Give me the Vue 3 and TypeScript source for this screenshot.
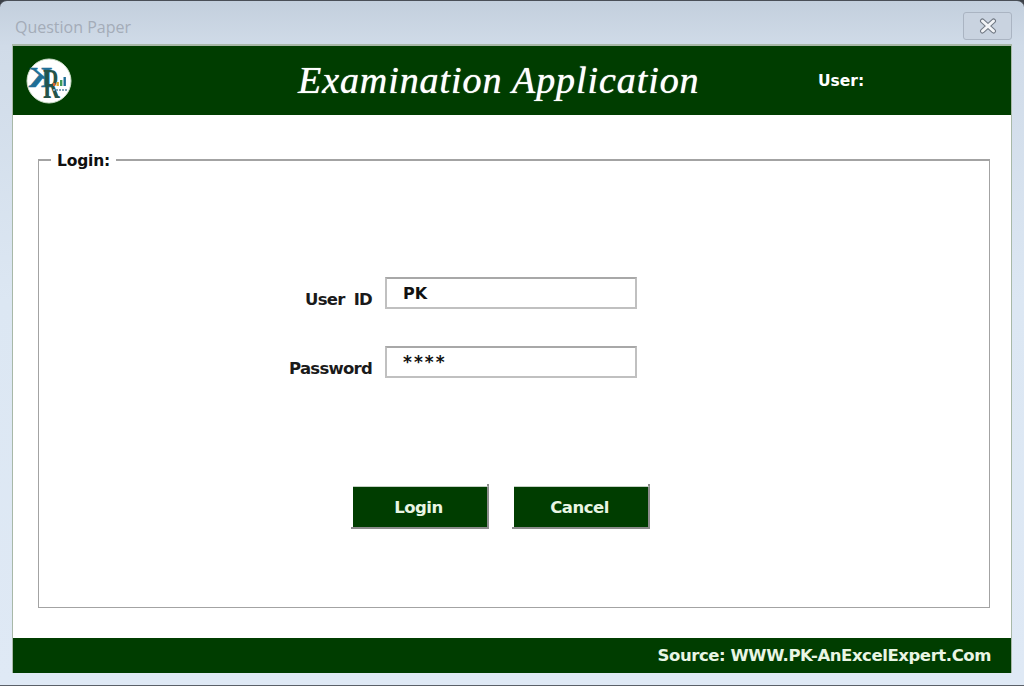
<script setup lang="ts">
import { ref } from "vue"

const userId = ref("PK")
const password = ref("****")
const logoBars = [
  { x: 27, y: 25, h: 3, fill: "#d9622b" },
  { x: 30.5, y: 24, h: 4, fill: "#e0a92e" },
  { x: 34, y: 22, h: 6, fill: "#3f9a55" },
  { x: 37.5, y: 19, h: 9, fill: "#1f6f96" }
]
</script>

<template>
  <div class="window">
    <div class="titlebar">
      <span class="caption">Question Paper</span>
      <button class="close" type="button" aria-label="Close">
        <svg width="18" height="16" viewBox="0 0 18 16">
          <path
            d="M3.5 3 L14.5 13 M14.5 3 L3.5 13"
            stroke="#6f7782"
            stroke-width="5"
            stroke-linecap="round"
          />
          <path
            d="M3.5 3 L14.5 13 M14.5 3 L3.5 13"
            stroke="#f2f4f7"
            stroke-width="3"
            stroke-linecap="round"
          />
        </svg>
      </button>
    </div>

    <main class="client">
      <header class="banner">
        <svg class="logo" width="46" height="46" viewBox="0 0 46 46">
          <circle cx="23" cy="23" r="22" fill="#ffffff" stroke="#cfe0cc" stroke-width="1" />
          <text transform="translate(26 29) scale(-1 1)" class="logo-k">K</text>
          <text transform="translate(17 40) scale(0.55 1)" class="logo-r">R</text>
          <rect
            v-for="bar in logoBars"
            :key="bar.x"
            :x="bar.x"
            :y="bar.y"
            width="2.4"
            :height="bar.h"
            :fill="bar.fill"
          />
          <path d="M27 32 H41" stroke="#7fa3b5" stroke-width="2" stroke-dasharray="2 1" />
        </svg>
        <h1>Examination Application</h1>
        <span class="user">User:</span>
      </header>

      <section class="body">
        <fieldset class="login">
          <legend>Login:</legend>
          <div class="fields">
            <label for="user-id">User ID</label>
            <input id="user-id" v-model="userId" type="text" />
            <label for="password">Password</label>
            <input id="password" v-model="password" class="secret" type="text" />
          </div>
          <div class="actions">
            <button type="button">Login</button>
            <button type="button">Cancel</button>
          </div>
        </fieldset>
      </section>

      <footer class="source">Source: WWW.PK-AnExcelExpert.Com</footer>
    </main>
  </div>
</template>

<style>
html,
body {
  margin: 0;
  background: #3c4148;
}
</style>

<style scoped>
.window {
  box-sizing: border-box;
  width: 1024px;
  height: 686px;
  padding: 1px 13px 12px 13px;
  border-top: 1px solid #4a4f57;
  border-bottom: 1px solid #5a6068;
  border-radius: 7px 7px 0 0;
  background: linear-gradient(180deg, #c3cfdd 0, #d0dbe8 45px, #dce7f3 300px, #dfe9f5 100%);
  display: flex;
  flex-direction: column;
  font-family: "DejaVu Sans", "Liberation Sans", sans-serif;
}

.titlebar {
  height: 44px;
  flex: none;
  display: flex;
  align-items: center;
  justify-content: space-between;
  padding: 0 0 0 2px;
}

.caption {
  font-family: "Open Sans", "Liberation Sans", sans-serif;
  font-size: 16px;
  color: #a4acb8;
  margin-top: 6px;
}

.close {
  width: 49px;
  height: 28px;
  margin: 4px -1px 0 0;
  padding: 0;
  border: 1px solid #aab4c2;
  border-radius: 3px;
  background: #c9d3e0;
  display: flex;
  align-items: center;
  justify-content: center;
}

.client {
  flex: 1;
  display: flex;
  flex-direction: column;
  background: #ffffff;
  box-shadow: 0 -1px 0 1px #a8b8a8;
}

.banner {
  height: 69px;
  flex: none;
  display: flex;
  align-items: center;
  background: #003d00;
  color: #ffffff;
  padding-left: 13px;
}

.logo {
  flex: none;
}

.logo-k,
.logo-r {
  font-family: "Liberation Serif", serif;
  font-weight: 700;
}

.logo-k {
  font-size: 30px;
  fill: #1f6f96;
  stroke: #1f6f96;
  stroke-width: 0.7px;
}

.logo-r {
  font-size: 42px;
  fill: #24544a;
}

.banner h1 {
  margin: -2px 0 0 226px;
  width: 402px;
  flex: none;
  font-family: "Liberation Serif", serif;
  font-style: italic;
  font-weight: 400;
  font-size: 38px;
  letter-spacing: 0.92px;
  white-space: nowrap;
  text-shadow: 0 0 1px #ffffff;
}

.user {
  margin-left: 118px;
  font-size: 15.5px;
  font-weight: 700;
}

.body {
  flex: 1;
  padding: 34px 21px 30px 25px;
  display: flex;
}

.login {
  flex: 1;
  margin: 0;
  min-width: 0;
  padding: 0;
  border: 1px solid #a3a3a3;
  border-top-width: 2px;
  display: flex;
  flex-direction: column;
}

.login legend {
  margin-left: 12px;
  padding: 3px 6px 0;
  font-size: 15.5px;
  font-weight: 700;
  letter-spacing: -0.2px;
  color: #111111;
}

.fields {
  margin: 107px 0 0 235px;
  display: grid;
  grid-template-columns: 98px 252px;
  grid-auto-rows: 32px;
  row-gap: 37px;
  column-gap: 13px;
  align-items: center;
}

.fields label {
  text-align: right;
  font-size: 16.5px;
  font-weight: 700;
  letter-spacing: -0.75px;
  word-spacing: 4px;
  color: #1a1a1a;
  margin-top: 12px;
  white-space: nowrap;
}

.fields input {
  box-sizing: border-box;
  width: 252px;
  height: 32px;
  padding: 0 0 0 16px;
  border: 2px solid #c0c0c0;
  border-top-color: #a8a8a8;
  background: #ffffff;
  font: 700 16px "DejaVu Sans", "Liberation Sans", sans-serif;
  color: #111111;
  outline: none;
}

.fields input.secret {
  font-size: 17px;
  letter-spacing: 2px;
}

.actions {
  margin: 108px 0 0 314px;
  display: flex;
  gap: 25px;
}

.actions button {
  position: relative;
  box-sizing: border-box;
  width: 136px;
  height: 43px;
  padding: 0 3px 0 0;
  border: solid #8c8c8c;
  border-width: 1px 2px 2px 0;
  border-top-color: #c4d0c4;
  background: #003d00;
  color: #e9f5e4;
  font: 700 16.5px "DejaVu Sans", "Liberation Sans", sans-serif;
  letter-spacing: -0.5px;
}

.actions button::before {
  content: "";
  position: absolute;
  left: -2px;
  bottom: -2px;
  width: 2px;
  height: 2px;
  background: #8c8c8c;
}

.actions button::after {
  content: "";
  position: absolute;
  right: -2px;
  top: -3px;
  width: 2px;
  height: 2px;
  background: #8c8c8c;
}

.source {
  height: 35px;
  flex: none;
  box-sizing: border-box;
  padding-right: 20px;
  background: #003d00;
  color: #e9f5e4;
  font-size: 16.5px;
  font-weight: 700;
  letter-spacing: -0.43px;
  line-height: 35px;
  text-align: right;
}
</style>
